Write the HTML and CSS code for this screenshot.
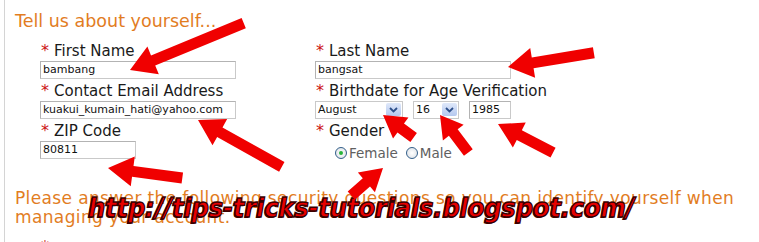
FILE: index.html
```html
<!DOCTYPE html>
<html>
<head>
<meta charset="utf-8">
<link rel="stylesheet" href="styles.css">
</head>
<body>
<div class="page">
  <h2 class="title">Tell us about yourself...</h2>
  <div class="form">
    <div class="col">
      <div class="field">
        <div class="label"><span class="req">*</span>First Name</div>
        <div class="input wide">bambang</div>
      </div>
      <div class="field">
        <div class="label"><span class="req">*</span>Contact Email Address</div>
        <div class="input wide">kuakui_kumain_hati@yahoo.com</div>
      </div>
      <div class="field">
        <div class="label"><span class="req">*</span>ZIP Code</div>
        <div class="input zip">80811</div>
      </div>
    </div>
    <div class="col">
      <div class="field">
        <div class="label"><span class="req">*</span>Last Name</div>
        <div class="input wide">bangsat</div>
      </div>
      <div class="field">
        <div class="label"><span class="req">*</span>Birthdate for Age Verification</div>
        <div class="date-row">
          <div class="select month"><span class="sel-text">August</span><span class="sel-btn"><svg width="9" height="6" viewBox="0 0 9 6"><path d="M1 1 L4.5 4.5 L8 1" fill="none" stroke="#2d4f8a" stroke-width="1.8"/></svg></span></div>
          <div class="select day"><span class="sel-text">16</span><span class="sel-btn"><svg width="9" height="6" viewBox="0 0 9 6"><path d="M1 1 L4.5 4.5 L8 1" fill="none" stroke="#2d4f8a" stroke-width="1.8"/></svg></span></div>
          <div class="input year">1985</div>
        </div>
      </div>
      <div class="field">
        <div class="label"><span class="req">*</span>Gender</div>
        <div class="radios">
          <span class="radio on"></span><span class="rlabel">Female</span>
          <span class="radio"></span><span class="rlabel">Male</span>
        </div>
      </div>
    </div>
  </div>
  <p class="note">Please answer the following security questions so you can identify yourself when<br>managing your account.</p>
  <div class="next"><span class="req">*</span></div>

  <div class="watermark">http://tips-tricks-tutorials.blogspot.com/</div>

  <svg class="arrows" width="759" height="242" viewBox="0 0 759 242">
    <g fill="#f00000">
      <polygon transform="translate(130,70) rotate(157.6)" points="0,0 -25,-15 -25,-5.5 -123,-5.5 -123,5.5 -25,5.5 -25,15"/>
      <polygon transform="translate(508,67) rotate(170.6)" points="0,0 -25,-15 -25,-5.5 -87,-5.5 -87,5.5 -25,5.5 -25,15"/>
      <polygon transform="translate(198,120) rotate(-150.8)" points="0,0 -25,-15 -25,-5.5 -96,-5.5 -96,5.5 -25,5.5 -25,15"/>
      <polygon transform="translate(108,168) rotate(-172.3)" points="0,0 -25,-15 -25,-5.5 -75,-5.5 -75,5.5 -25,5.5 -25,15"/>
      <polygon transform="translate(383,115) rotate(-143.7)" points="0,0 -22,-13 -22,-5.5 -38,-5.5 -38,5.5 -22,5.5 -22,13"/>
      <polygon transform="translate(440,115) rotate(-127.1)" points="0,0 -22,-13 -22,-5.5 -47,-5.5 -47,5.5 -22,5.5 -22,13"/>
      <polygon transform="translate(498,124) rotate(-152.6)" points="0,0 -24,-14 -24,-5.5 -62,-5.5 -62,5.5 -24,5.5 -24,14"/>
      <polygon transform="translate(383,168) rotate(-41)" points="0,0 -22,-13 -22,-5.5 -42,-5.5 -42,5.5 -22,5.5 -22,13"/>
    </g>
  </svg>
</div>
</body>
</html>
```

FILE: styles.css
```css
* { box-sizing: border-box; }
html, body { margin: 0; padding: 0; background: #fff; }
body { width: 759px; height: 242px; overflow: hidden; font-family: "DejaVu Sans", Verdana, sans-serif; }
.page {
  position: relative;
  margin-left: 4px;
  height: 242px;
  border-left: 1px solid #d4d4d4;
  padding-left: 10px;
}
.title {
  margin: 0;
  padding-top: 10px;
  font-size: 17.5px;
  font-weight: normal;
  color: #e27d1f;
  line-height: 22px;
  height: 39px;
}
.form {
  display: grid;
  grid-template-columns: 275px 300px;
  padding-left: 25px;
}
.field { display: flex; flex-direction: column; }
.label {
  height: 22px;
  padding-top: 2px;
  font-size: 15px;
  line-height: 20px;
  color: #1a1a1a;
  white-space: nowrap;
}
.req { color: #cc1010; font-size: 16px; margin-left: 1px; margin-right: 5px; }
.input {
  height: 18px;
  border: 1px solid #c9c9c9;
  border-top-color: #b3b3b3;
  border-left-color: #b3b3b3;
  background: #fff;
  font-size: 11px;
  line-height: 16px;
  padding-left: 2px;
  color: #111;
  white-space: nowrap;
  overflow: hidden;
}
.wide { width: 196px; }
.zip { width: 96px; }
.date-row { display: flex; height: 18px; }
.select {
  height: 18px;
  border: 1px solid #c9c9c9;
  display: flex;
  align-items: flex-start;
  font-size: 11px;
  line-height: 16px;
  color: #111;
}
.sel-text { flex: 1; padding-left: 2px; }
.sel-btn {
  width: 15px;
  height: 13px;
  margin-top: 1px;
  margin-right: 1px;
  background: linear-gradient(#dfe8fa, #b4c8ef);
  border-radius: 2px;
  display: flex;
  align-items: center;
  justify-content: center;
}
.month { width: 88px; margin-right: 10px; }
.day { width: 46px; margin-right: 10px; }
.year { width: 42px; }
.radios {
  display: flex;
  align-items: center;
  height: 18px;
  padding-left: 20px;
  margin-top: 3px;
}
.radio {
  width: 12px;
  height: 12px;
  border-radius: 50%;
  border: 1px solid #335f8a;
  background: radial-gradient(#fff, #d8dde3);
  position: relative;
  margin-right: 2px;
}
.radio.on::after {
  content: "";
  position: absolute;
  left: 3px; top: 3px;
  width: 4px; height: 4px;
  border-radius: 50%;
  background: #27b33a;
}
.rlabel { font-size: 13.5px; color: #606060; margin-right: 8px; line-height: 18px; }
.note {
  margin: 27px 0 0 0;
  font-size: 17px;
  letter-spacing: 0.37px;
  line-height: 19px;
  color: #e27d1f;
  white-space: nowrap;
}
.next { padding-left: 25px; margin-top: 10px; height: 10px; overflow: hidden; line-height: 20px; }
.watermark {
  position: absolute;
  left: 83px;
  top: 192px;
  font-family: "DejaVu Sans Condensed", "DejaVu Sans", sans-serif;
  font-weight: bold;
  font-style: italic;
  font-size: 27px;
  letter-spacing: -0.2px;
  color: #e80000;
  -webkit-text-stroke: 1.4px #3a0000;
  text-shadow: -1px 1px 0 #3a0000;
  white-space: nowrap;
}
.arrows { position: absolute; left: -5px; top: 0; pointer-events: none; }
```
